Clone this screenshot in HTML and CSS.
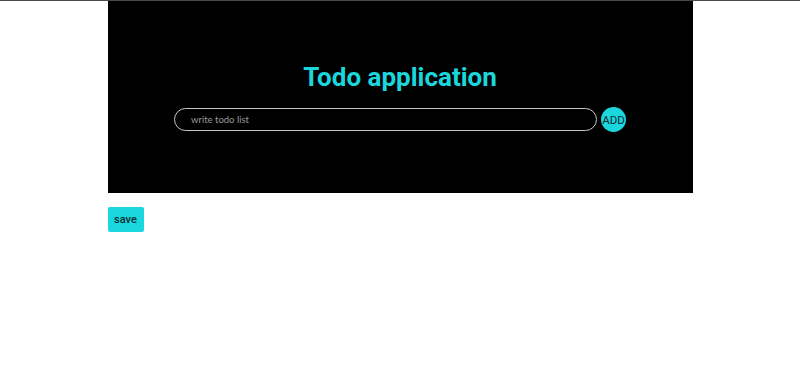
FILE: index.html
```html
<!DOCTYPE html>
<html lang="en">
<head>
<meta charset="utf-8">
<title>Todo application</title>
<link rel="stylesheet" href="styles.css">
</head>
<body>
<div class="page">
  <main class="container">
    <section class="hero">
      <h1 class="title">Todo application</h1>
      <form class="add-row">
        <input class="todo-input" type="text" placeholder="write todo list">
        <button class="add-btn" type="button">ADD</button>
      </form>
    </section>
    <button class="save-btn" type="button">save</button>
  </main>
</div>
</body>
</html>
```
FILE: styles.css
```css
html, body {
  margin: 0;
  padding: 0;
  background: #ffffff;
}
.page {
  border-top: 1px solid #4a4a4a;
  min-height: 383px;
}
.container {
  width: 585px;
  margin: 0 auto;
  display: flex;
  flex-direction: column;
  align-items: flex-start;
}
.hero {
  width: 100%;
  height: 192px;
  background: #000000;
  box-sizing: border-box;
  padding-top: 59px;
  display: flex;
  flex-direction: column;
  align-items: center;
}
.title {
  margin: 0;
  font-family: Roboto, "Liberation Sans", sans-serif;
  font-weight: 700;
  font-size: 26px;
  line-height: 34px;
  color: #1ad6dd;
}
.add-row {
  margin: 13px 0 0;
  display: flex;
  align-items: center;
  gap: 4px;
}
.todo-input {
  width: 423px;
  height: 23px;
  box-sizing: border-box;
  border: 1px solid #c8c8c8;
  border-radius: 12px;
  background: #000000;
  color: #dddddd;
  padding: 0 16px;
  font-family: Lato, "Open Sans", sans-serif;
  font-size: 9.5px;
  outline: none;
}
.todo-input::placeholder {
  color: #9a9a9a;
}
.add-btn {
  width: 25px;
  height: 25px;
  border-radius: 50%;
  border: none;
  padding: 0;
  background: #1ad6dd;
  color: #0d2b33;
  font-family: Roboto, "Liberation Sans", sans-serif;
  font-size: 11.5px;
  display: flex;
  align-items: center;
  justify-content: center;
}
.save-btn {
  margin-top: 14px;
  width: 36px;
  height: 25px;
  border: none;
  border-radius: 2px;
  padding: 0;
  background: #1ad6dd;
  color: #0d2b33;
  font-family: Roboto, "Liberation Sans", sans-serif;
  font-weight: 500;
  font-size: 11px;
}
```
